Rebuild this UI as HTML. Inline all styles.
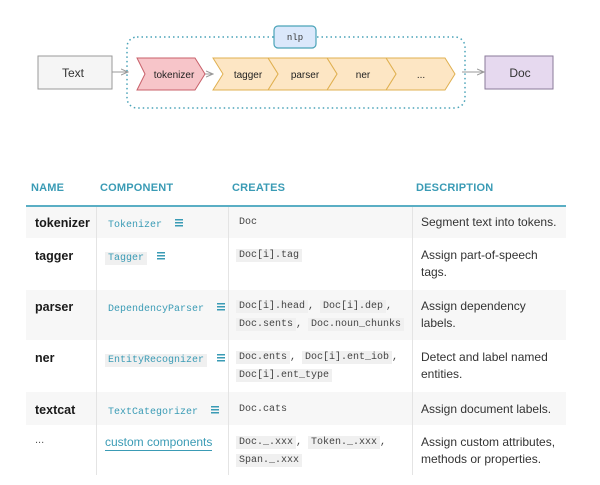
<!DOCTYPE html>
<html><head><meta charset="utf-8"><style>
body{margin:0;width:600px;height:485px;background:#fff;position:relative;overflow:hidden;font-family:"Liberation Sans",sans-serif}
.a{position:absolute;white-space:nowrap}
.h{color:#3a9bb5;font-size:11px;font-weight:bold;top:182px;letter-spacing:0.2px}
.n{font-weight:bold;font-size:12.5px;color:#1a1a1a;left:35px;line-height:16px}
.cc{height:18px;left:105px;line-height:18px}
.c{font-family:"Liberation Mono",monospace;font-size:10px;color:#3a9bb5;padding:1px 3px;line-height:14px;position:relative;top:0px}
.g{background:#f0f0f0}
.m{font-family:"Liberation Mono",monospace;font-size:10px;color:#444;line-height:18px}
.m span{background:#f0f0f0;padding:1px 3px}
.d{font-size:12px;color:#333;line-height:17px;left:421px}
.row{position:absolute;left:26px;width:540px}
.ic{display:inline-block;width:8px;height:8px;margin-left:10px;position:relative;top:0px;background:linear-gradient(#3a9bb5 0 1.5px,transparent 1.5px 3px,#3a9bb5 3px 4.5px,transparent 4.5px 6px,#3a9bb5 6px 7.5px,transparent 7.5px);}
</style></head><body>
<svg class="a" style="left:0;top:0" width="600" height="120">
<defs><marker id="ar" markerWidth="8" markerHeight="8" refX="7" refY="4" orient="auto"><path d="M0,1 L7,4 L0,7" fill="none" stroke="#999" stroke-width="1"/></marker></defs>
<rect x="127" y="37" width="338" height="71" rx="10" fill="none" stroke="#4aa3b8" stroke-width="1.5" stroke-dasharray="1.5,3"/>
<rect x="274" y="26" width="42" height="22" rx="4" fill="#dbe8fb" stroke="#4aa3b8" stroke-width="1.2"/>
<text x="295" y="40" font-family="Liberation Mono,monospace" font-size="9" text-anchor="middle" fill="#333">nlp</text>
<rect x="38" y="56" width="74" height="33" fill="#f5f5f5" stroke="#999"/>
<text x="73" y="77" font-size="12" text-anchor="middle" fill="#333" font-family="Liberation Sans,sans-serif">Text</text>
<rect x="485" y="56" width="68" height="33" fill="#e6d9ef" stroke="#8a7a9a"/>
<text x="520" y="77" font-size="12" text-anchor="middle" fill="#333" font-family="Liberation Sans,sans-serif">Doc</text>
<line x1="112" y1="72" x2="128" y2="72" stroke="#999" marker-end="url(#ar)"/>
<line x1="205" y1="74" x2="213" y2="74" stroke="#999" marker-end="url(#ar)"/>
<line x1="462" y1="72" x2="484" y2="72" stroke="#999" marker-end="url(#ar)"/>
<path d="M137,58 L195,58 L205,74 L195,90 L137,90 L145,74Z" fill="#f7c5c9" stroke="#c8606a" stroke-width="1"/>
<text x="174" y="78" font-size="10" text-anchor="middle" fill="#222" font-family="Liberation Sans,sans-serif">tokenizer</text>
<g fill="#fde6c4" stroke="#e0b050" stroke-width="1">
<path d="M386,58 L445,58 L455,74 L445,90 L386,90 L396,74Z"/>
<path d="M327,58 L386,58 L396,74 L386,90 L327,90 L337,74Z"/>
<path d="M268,58 L327,58 L337,74 L327,90 L268,90 L278,74Z"/>
<path d="M213,58 L268,58 L278,74 L268,90 L213,90 L223,74Z"/>
</g>
<g font-size="10" text-anchor="middle" fill="#222" font-family="Liberation Sans,sans-serif">
<text x="248" y="78">tagger</text><text x="305" y="78">parser</text><text x="363" y="78">ner</text><text x="421" y="78">...</text></g>
</svg>
<div class="a h" style="left:31px">NAME</div>
<div class="a h" style="left:100px">COMPONENT</div>
<div class="a h" style="left:232px">CREATES</div>
<div class="a h" style="left:416px">DESCRIPTION</div>
<div class="row" style="top:205px;height:1.5px;background:#5aaec4"></div>
<div class="row" style="top:207px;height:31px;background:#f7f7f7"></div>
<div class="row" style="top:290px;height:50px;background:#f7f7f7"></div>
<div class="row" style="top:392px;height:33px;background:#f7f7f7"></div>
<div class="a" style="left:96px;top:207px;width:1px;height:268px;background:#e4e4e4"></div>
<div class="a" style="left:228px;top:207px;width:1px;height:268px;background:#e4e4e4"></div>
<div class="a" style="left:412px;top:207px;width:1px;height:268px;background:#e4e4e4"></div>

<div class="a n" style="top:215px">tokenizer</div>
<div class="a cc" style="top:214px"><span class="c">Tokenizer</span><span class="ic"></span></div>
<div class="a m" style="left:236px;top:214px"><span style="background:none">Doc</span></div>
<div class="a d" style="top:214px">Segment text into tokens.</div>

<div class="a n" style="top:248px">tagger</div>
<div class="a cc" style="top:247px"><span class="c g">Tagger</span><span class="ic"></span></div>
<div class="a m" style="left:236px;top:247px"><span>Doc[i].tag</span></div>
<div class="a d" style="top:247px">Assign part-of-speech<br>tags.</div>

<div class="a n" style="top:299px">parser</div>
<div class="a cc" style="top:298px"><span class="c">DependencyParser</span><span class="ic"></span></div>
<div class="a m" style="left:236px;top:298px"><span>Doc[i].head</span>, <span>Doc[i].dep</span>,<br><span>Doc.sents</span>, <span>Doc.noun_chunks</span></div>
<div class="a d" style="top:298px">Assign dependency<br>labels.</div>

<div class="a n" style="top:350px">ner</div>
<div class="a cc" style="top:349px"><span class="c g">EntityRecognizer</span><span class="ic"></span></div>
<div class="a m" style="left:236px;top:349px"><span>Doc.ents</span>, <span>Doc[i].ent_iob</span>,<br><span>Doc[i].ent_type</span></div>
<div class="a d" style="top:349px">Detect and label named<br>entities.</div>

<div class="a n" style="top:402px">textcat</div>
<div class="a cc" style="top:401px"><span class="c">TextCategorizer</span><span class="ic"></span></div>
<div class="a m" style="left:236px;top:401px"><span style="background:none">Doc.cats</span></div>
<div class="a d" style="top:401px">Assign document labels.</div>

<div class="a" style="left:35px;top:434px;font-size:11px;color:#555">...</div>
<div class="a" style="left:105px;top:434px;font-size:12px;color:#3a9bb5;border-bottom:1px solid #3a9bb5;line-height:16px">custom components</div>
<div class="a m" style="left:236px;top:434px"><span>Doc._.xxx</span>, <span>Token._.xxx</span>,<br><span>Span._.xxx</span></div>
<div class="a d" style="top:434px">Assign custom attributes,<br>methods or properties.</div>
</body></html>
